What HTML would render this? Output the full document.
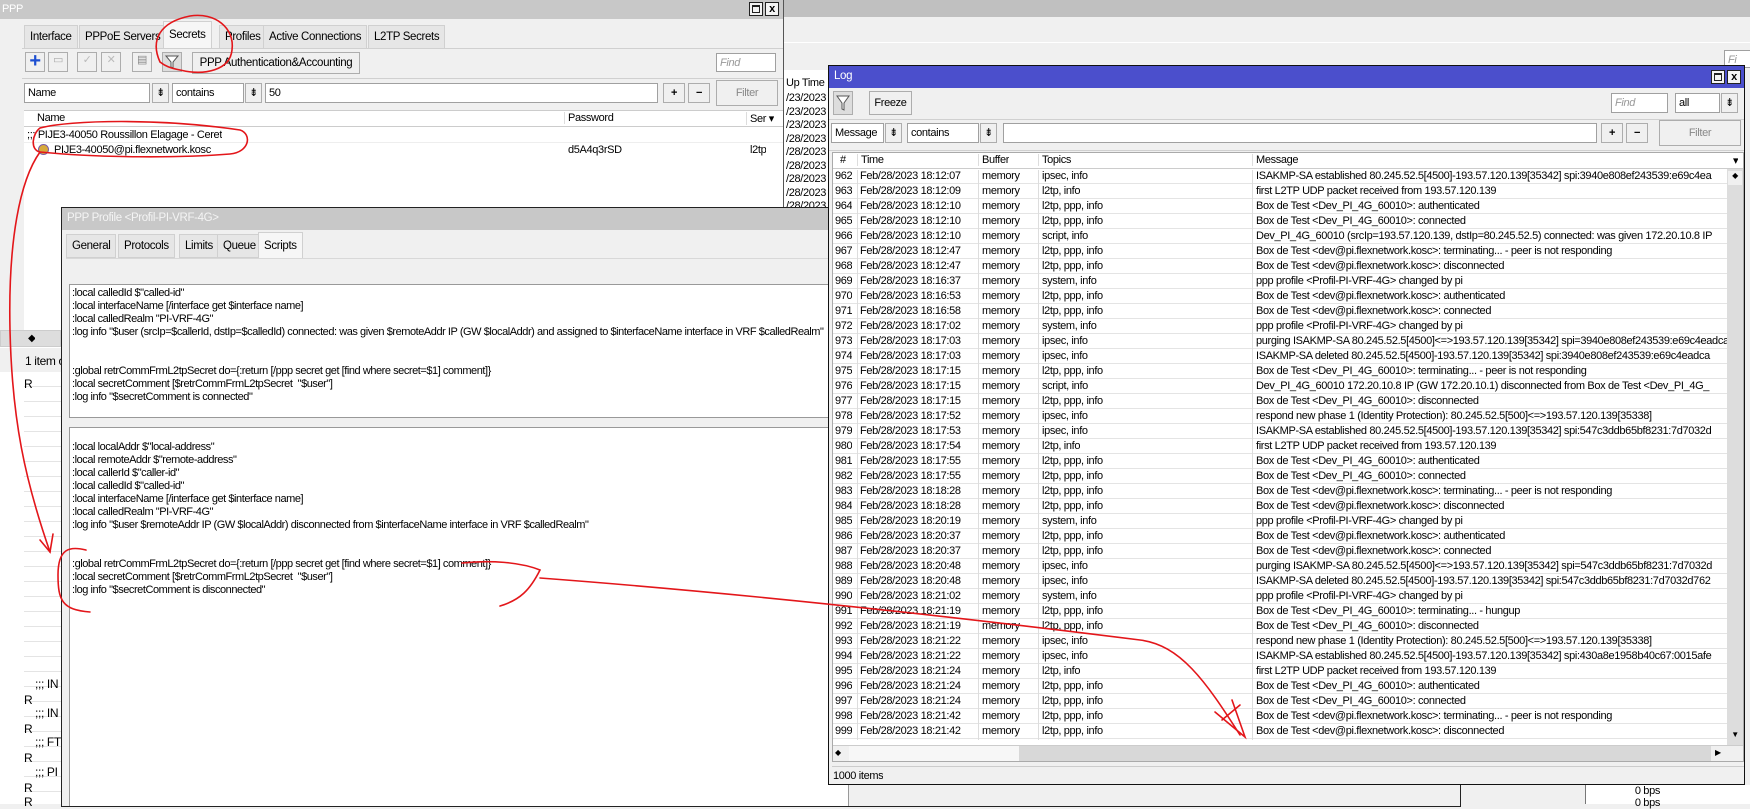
<!DOCTYPE html>
<html><head><meta charset="utf-8">
<style>
*{box-sizing:border-box;margin:0;padding:0}
body{width:1750px;height:804px;overflow:hidden;background:#f0f0f0;position:relative;font-family:"Liberation Sans",sans-serif;font-size:11px;letter-spacing:-0.35px;color:#000}
.a{position:absolute;white-space:nowrap;overflow:hidden}
.btn{position:absolute;background:#f0f0f0;border:1px solid #adadad}
.inp{position:absolute;background:#fff;border:1px solid #a0a0a0;padding-left:3px;line-height:18px}
.tab{position:absolute;border:1px solid #d0d0d0;background:#e6e6e6;padding:0 5px;line-height:22px;font-size:11.5px}
.tab.on{background:#f6f6f6;border-bottom:none;line-height:26px}
.row{position:absolute;left:0;height:15px;border-bottom:1px solid #e4e4e4;width:100%}
.row span{position:absolute;top:1px;white-space:nowrap;overflow:hidden}
.code{position:absolute;font-size:11px;line-height:13px;white-space:pre;overflow:hidden;letter-spacing:-0.45px}
</style></head><body>

<!-- background window top right -->
<div class="a" style="left:783px;top:0;width:967px;height:17px;background:#c0c0c0"></div>
<div class="a" style="left:783px;top:42px;width:967px;height:1px;background:#fff"></div>
<div class="inp" style="left:1724px;top:50px;width:30px;height:18px;color:#999;font-style:italic">Fi</div>
<div class="a" style="left:783px;top:70px;width:45px;height:160px;background:#fff;border-left:1px solid #999"></div>
<div class="a" style="left:786px;top:77px;">Up Time</div>
<div class="a" style="left:786px;top:92px;width:42px;line-height:13.5px;white-space:pre">/23/2023
/23/2023
/23/2023
/28/2023
/28/2023
/28/2023
/28/2023
/28/2023
/28/2023</div>
<!-- bottom right bps -->
<div class="a" style="left:1585px;top:785px;width:1px;height:19px;background:#777"></div>
<div class="a" style="left:1586px;top:785px;width:164px;height:19px;background:#fff"></div>
<div class="a" style="left:1620px;top:785px;width:40px;text-align:right">0 bps</div>
<div class="a" style="left:1620px;top:797px;width:40px;text-align:right">0 bps</div>

<!-- PPP window -->
<div class="a" style="left:0;top:0;width:784px;height:360px;background:#f0f0f0;border-right:1px solid #555">
 <div class="a" style="left:0;top:0;width:783px;height:19px;background:#c8c8c8;color:#fff;padding:3px 2px;font-size:11px">PPP</div>
 <div class="a" style="left:749px;top:2px;width:14px;height:14px;border:1px solid #222;background:#f4f4f4"><div style="margin:2px;width:8px;height:8px;border:1px solid #222;border-top-width:2px"></div></div>
 <div class="a" style="left:765px;top:2px;width:14px;height:14px;border:1px solid #222;background:#f4f4f4;font-weight:bold;text-align:center;line-height:12px">x</div>
 <div class="tab" style="left:24px;top:25px">Interface</div>
 <div class="tab" style="left:79px;top:25px">PPPoE Servers</div>
 <div class="tab on" style="left:163px;top:21px">Secrets</div>
 <div class="tab" style="left:219px;top:25px">Profiles</div>
 <div class="tab" style="left:263px;top:25px">Active Connections</div>
 <div class="tab" style="left:368px;top:25px">L2TP Secrets</div>
 <div class="a" style="left:22px;top:48px;width:761px;height:1px;background:#d0d0d0"></div>
 <div class="btn" style="left:25px;top:52px;width:20px;height:20px;color:#1d4fd1;font-weight:bold;font-size:20px;line-height:16px;text-align:center">+</div>
 <div class="btn" style="left:48px;top:52px;width:20px;height:20px;color:#aaa;text-align:center">▭</div>
 <div class="btn" style="left:77px;top:52px;width:20px;height:20px;color:#bbb;text-align:center">✓</div>
 <div class="btn" style="left:101px;top:52px;width:20px;height:20px;color:#bbb;text-align:center">✕</div>
 <div class="btn" style="left:132px;top:52px;width:20px;height:20px;color:#888;text-align:center">▤</div>
 <div class="btn" style="left:162px;top:52px;width:20px;height:20px;background:#ddd"><svg width="18" height="18" viewBox="0 0 18 18"><path d="M3,3 L15,3 L10,9 L10,15 L8,14 L8,9 Z" fill="#fff" stroke="#555"/></svg></div>
 <div class="btn" style="left:192px;top:52px;width:168px;height:22px;line-height:20px;text-align:center;font-size:11.5px">PPP Authentication&amp;Accounting</div>
 <div class="inp" style="left:716px;top:53px;width:60px;height:19px;color:#999;font-style:italic">Find</div>
 <div class="a" style="left:22px;top:78px;width:761px;height:1px;background:#d0d0d0"></div>
 <div class="inp" style="left:24px;top:83px;width:126px;height:20px">Name</div>
 <div class="btn" style="left:152px;top:83px;width:17px;height:20px;text-align:center;line-height:18px">⇟</div>
 <div class="inp" style="left:172px;top:83px;width:72px;height:20px">contains</div>
 <div class="btn" style="left:245px;top:83px;width:17px;height:20px;text-align:center;line-height:18px">⇟</div>
 <div class="inp" style="left:265px;top:83px;width:393px;height:20px">50</div>
 <div class="btn" style="left:663px;top:83px;width:22px;height:20px;text-align:center;font-weight:bold;line-height:18px">+</div>
 <div class="btn" style="left:688px;top:83px;width:22px;height:20px;text-align:center;font-weight:bold;line-height:18px">−</div>
 <div class="btn" style="left:716px;top:80px;width:62px;height:26px;line-height:24px;text-align:center;color:#888">Filter</div>
 <div class="a" style="left:24px;top:110px;width:759px;height:230px;background:#fff;border-top:1px solid #ccc">
  <div class="a" style="left:0;top:0;width:759px;height:16px;border-bottom:1px solid #ccc;background:#fff"></div>
  <div class="a" style="left:13px;top:1px">Name</div>
  <div class="a" style="left:540px;top:1px;border-left:1px solid #ddd;padding-left:3px">Password</div>
  <div class="a" style="left:722px;top:1px;border-left:1px solid #ddd;padding-left:3px">Ser ▾</div>
  <div class="a" style="left:0;top:17px;width:759px;height:15px;border-bottom:1px solid #eee"></div>
  <div class="a" style="left:3px;top:18px">;;; PIJE3-40050 Roussillon Elagage - Ceret</div>
  <div class="a" style="left:14px;top:33px;width:11px;height:11px;border-radius:50%;background:#d7a93c;border:1px solid #7a5aa8"></div>
  <div class="a" style="left:30px;top:33px">PIJE3-40050@pi.flexnetwork.kosc</div>
  <div class="a" style="left:544px;top:33px">d5A4q3rSD</div>
  <div class="a" style="left:726px;top:33px">l2tp</div>
 </div>
</div>
<!-- left strip of PPP below -->
<div class="a" style="left:0;top:330px;width:61px;height:474px;background:#fff">
 <div class="a" style="left:0;top:0;width:61px;height:17px;background:#ddd;border:1px solid #ccc"></div>
 <div class="a" style="left:28px;top:3px;font-size:10px">◆</div>
 <div class="a" style="left:0;top:18px;width:61px;height:24px;background:#f0f0f0"></div>
 <div class="a" style="left:25px;top:24px;font-size:12px">1 item o</div>
</div>
<div class="a" style="left:24px;top:372px;width:37px;height:432px;background:repeating-linear-gradient(#fff 0 14px,#e4e4e4 14px 15px)"></div>
<div class="a" style="left:24px;top:377px;font-size:12px">R</div>
<div class="a" style="left:35px;top:677px;font-size:12px">;;; IN</div>
<div class="a" style="left:24px;top:693px;font-size:12px">R</div>
<div class="a" style="left:35px;top:706px;font-size:12px">;;; IN</div>
<div class="a" style="left:24px;top:722px;font-size:12px">R</div>
<div class="a" style="left:35px;top:735px;font-size:12px">;;; FT</div>
<div class="a" style="left:24px;top:751px;font-size:12px">R</div>
<div class="a" style="left:35px;top:765px;font-size:12px">;;; PI</div>
<div class="a" style="left:24px;top:781px;font-size:12px">R</div>
<div class="a" style="left:24px;top:795px;font-size:12px">R</div>

<!-- PPP Profile window -->
<div class="a" style="left:61px;top:207px;width:1400px;height:600px;background:#f0f0f0;border:1px solid #222">
 <div class="a" style="left:0;top:0;width:1400px;height:22px;background:#c8c8c8;color:#f4f4f4;padding:4px 5px;font-size:11.5px">PPP Profile &lt;Profil-PI-VRF-4G&gt;</div>
 <div class="tab" style="left:4px;top:26px">General</div>
 <div class="tab" style="left:56px;top:26px">Protocols</div>
 <div class="tab" style="left:117px;top:26px">Limits</div>
 <div class="tab" style="left:155px;top:26px">Queue</div>
 <div class="tab on" style="left:196px;top:24px">Scripts</div>
 <div class="a" style="left:4px;top:50px;width:796px;height:1px;background:#d8d8d8"></div>
 <div class="a" style="left:7px;top:76px;width:800px;height:134px;background:#fff;border:1px solid #999"></div>
 <div class="code" style="left:10px;top:79px;width:780px">:local calledId $"called-id"
:local interfaceName [/interface get $interface name]
:local calledRealm "PI-VRF-4G"
:log info "$user (srcIp=$callerId, dstIp=$calledId) connected: was given $remoteAddr IP (GW $localAddr) and assigned to $interfaceName interface in VRF $calledRealm"


:global retrCommFrmL2tpSecret do={:return [/ppp secret get [find where secret=$1] comment]}
:local secretComment [$retrCommFrmL2tpSecret  "$user"]
:log info "$secretComment is connected"</div>
 <div class="a" style="left:7px;top:219px;width:780px;height:400px;background:#fff;border:1px solid #999"></div>
 <div class="code" style="left:10px;top:233px;width:770px">:local localAddr $"local-address"
:local remoteAddr $"remote-address"
:local callerId $"caller-id"
:local calledId $"called-id"
:local interfaceName [/interface get $interface name]
:local calledRealm "PI-VRF-4G"
:log info "$user $remoteAddr IP (GW $localAddr) disconnected from $interfaceName interface in VRF $calledRealm"


:global retrCommFrmL2tpSecret do={:return [/ppp secret get [find where secret=$1] comment]}
:local secretComment [$retrCommFrmL2tpSecret  "$user"]
:log info "$secretComment is disconnected"</div>
</div>

<!-- Log window -->
<div class="a" style="left:828px;top:65px;width:917px;height:720px;background:#f0f0f0;border:1px solid #111">
 <div class="a" style="left:0;top:0;width:917px;height:22px;background:#4b4fcc;color:#fff;padding:4px 5px;font-size:11.5px">Log</div>
 <div class="a" style="left:882px;top:4px;width:14px;height:14px;border:1px solid #222;background:#f4f4f4"><div style="margin:2px;width:8px;height:8px;border:1px solid #222;border-top-width:2px"></div></div>
 <div class="a" style="left:898px;top:4px;width:14px;height:14px;border:1px solid #222;background:#f4f4f4;font-weight:bold;text-align:center;line-height:12px;color:#000">x</div>
 <div class="btn" style="left:4px;top:25px;width:20px;height:24px;background:#ddd"><svg width="18" height="22" viewBox="0 0 18 22"><path d="M3,4 L15,4 L10,11 L10,18 L8,17 L8,11 Z" fill="#fff" stroke="#555"/></svg></div>
 <div class="btn" style="left:40px;top:25px;width:43px;height:24px;line-height:22px;text-align:center">Freeze</div>
 <div class="inp" style="left:782px;top:27px;width:57px;height:20px;color:#999;font-style:italic">Find</div>
 <div class="inp" style="left:846px;top:27px;width:45px;height:20px">all</div>
 <div class="btn" style="left:892px;top:27px;width:17px;height:20px;text-align:center;line-height:18px">⇟</div>
 <div class="a" style="left:0;top:53px;width:917px;height:1px;background:#d0d0d0"></div>
 <div class="inp" style="left:2px;top:57px;width:53px;height:20px">Message</div>
 <div class="btn" style="left:56px;top:57px;width:17px;height:20px;text-align:center;line-height:18px">⇟</div>
 <div class="inp" style="left:78px;top:57px;width:72px;height:20px">contains</div>
 <div class="btn" style="left:151px;top:57px;width:17px;height:20px;text-align:center;line-height:18px">⇟</div>
 <div class="inp" style="left:174px;top:57px;width:594px;height:20px"></div>
 <div class="btn" style="left:772px;top:57px;width:22px;height:20px;text-align:center;font-weight:bold;line-height:18px">+</div>
 <div class="btn" style="left:797px;top:57px;width:22px;height:20px;text-align:center;font-weight:bold;line-height:18px">−</div>
 <div class="btn" style="left:830px;top:54px;width:82px;height:26px;line-height:24px;text-align:center;color:#888">Filter</div>
 <div class="a" style="left:0;top:84px;width:917px;height:1px;background:#d0d0d0"></div>
 <div class="a" style="left:3px;top:86px;width:912px;height:610px;background:#fff;border:1px solid #aaa">
  <div class="row" style="top:0;height:16px;border-bottom:1px solid #ccc"><span style="left:7px">#</span><span style="left:24px;border-left:1px solid #ddd;padding-left:3px">Time</span><span style="left:145px;border-left:1px solid #ddd;padding-left:3px">Buffer</span><span style="left:205px;border-left:1px solid #ddd;padding-left:3px">Topics</span><span style="left:419px;border-left:1px solid #ddd;padding-left:3px">Message</span><span style="left:900px">▾</span></div>
  <div id="rows" class="a" style="left:0;top:16px;width:894px;height:580px"></div>
  <div class="a" style="left:894px;top:16px;width:16px;height:576px;background:#ddd"><div style="position:absolute;left:1px;top:2px;width:14px;height:14px;font-size:8px;text-align:center;background:#f0f0f0">◆</div><div style="position:absolute;left:1px;top:561px;font-size:8px;width:14px;text-align:center">▼</div></div>
  <div class="a" style="left:0;top:592px;width:910px;height:16px;background:#f0f0f0;border-top:1px solid #ccc"><div style="position:absolute;left:2px;top:2px;font-size:8px">◆</div><div style="position:absolute;left:16px;top:0;width:170px;height:15px;background:#f7f7f7"></div><div style="position:absolute;left:186px;top:0;width:692px;height:15px;background:#d8d8d8"></div><div style="position:absolute;left:882px;top:2px;font-size:8px">▶</div></div>
 </div>
 <div class="a" style="left:3px;top:700px;width:912px;height:1px;background:#ccc"></div>
 <div class="a" style="left:4px;top:704px;font-size:11px">1000 items</div>
</div>

<svg class="a" style="left:0;top:0" width="1750" height="804" viewBox="0 0 1750 804">
<g fill="none" stroke="#e3161a" stroke-width="1.6" stroke-linecap="round">
<path d="M160,62 C150,40 160,22 190,16 C215,12 235,28 232,50 C230,70 205,76 180,70 C170,68 165,66 160,62"/>
<path d="M40,128 C70,120 160,118 240,130 C252,134 250,152 230,154 C180,158 100,158 40,152 C30,150 32,134 40,128"/>
<path d="M40,152 C20,180 8,240 10,330 C12,420 25,480 50,552"/>
<path d="M40,540 L50,552 L53,534"/>
<path d="M86,550 C70,546 58,548 58,575 C58,600 62,610 90,612"/>
<path d="M462,563 C490,560 520,562 540,570 C530,590 520,600 500,606"/>
<path d="M540,578 C700,590 900,610 1140,640 C1180,645 1205,680 1240,735"/>
<path d="M1215,712 L1245,737 L1232,700 M1222,720 L1240,705"/>
</g></svg>

<script>
var d=[
["962","18:12:07","ipsec, info","ISAKMP-SA established 80.245.52.5[4500]-193.57.120.139[35342] spi:3940e808ef243539:e69c4ea"],
["963","18:12:09","l2tp, info","first L2TP UDP packet received from 193.57.120.139"],
["964","18:12:10","l2tp, ppp, info","Box de Test <Dev_PI_4G_60010>: authenticated"],
["965","18:12:10","l2tp, ppp, info","Box de Test <Dev_PI_4G_60010>: connected"],
["966","18:12:10","script, info","Dev_PI_4G_60010 (srcIp=193.57.120.139, dstIp=80.245.52.5) connected: was given 172.20.10.8 IP"],
["967","18:12:47","l2tp, ppp, info","Box de Test <dev@pi.flexnetwork.kosc>: terminating... - peer is not responding"],
["968","18:12:47","l2tp, ppp, info","Box de Test <dev@pi.flexnetwork.kosc>: disconnected"],
["969","18:16:37","system, info","ppp profile <Profil-PI-VRF-4G> changed by pi"],
["970","18:16:53","l2tp, ppp, info","Box de Test <dev@pi.flexnetwork.kosc>: authenticated"],
["971","18:16:58","l2tp, ppp, info","Box de Test <dev@pi.flexnetwork.kosc>: connected"],
["972","18:17:02","system, info","ppp profile <Profil-PI-VRF-4G> changed by pi"],
["973","18:17:03","ipsec, info","purging ISAKMP-SA 80.245.52.5[4500]<=>193.57.120.139[35342] spi=3940e808ef243539:e69c4eadca"],
["974","18:17:03","ipsec, info","ISAKMP-SA deleted 80.245.52.5[4500]-193.57.120.139[35342] spi:3940e808ef243539:e69c4eadca"],
["975","18:17:15","l2tp, ppp, info","Box de Test <Dev_PI_4G_60010>: terminating... - peer is not responding"],
["976","18:17:15","script, info","Dev_PI_4G_60010 172.20.10.8 IP (GW 172.20.10.1) disconnected from Box de Test <Dev_PI_4G_"],
["977","18:17:15","l2tp, ppp, info","Box de Test <Dev_PI_4G_60010>: disconnected"],
["978","18:17:52","ipsec, info","respond new phase 1 (Identity Protection): 80.245.52.5[500]<=>193.57.120.139[35338]"],
["979","18:17:53","ipsec, info","ISAKMP-SA established 80.245.52.5[4500]-193.57.120.139[35342] spi:547c3ddb65bf8231:7d7032d"],
["980","18:17:54","l2tp, info","first L2TP UDP packet received from 193.57.120.139"],
["981","18:17:55","l2tp, ppp, info","Box de Test <Dev_PI_4G_60010>: authenticated"],
["982","18:17:55","l2tp, ppp, info","Box de Test <Dev_PI_4G_60010>: connected"],
["983","18:18:28","l2tp, ppp, info","Box de Test <dev@pi.flexnetwork.kosc>: terminating... - peer is not responding"],
["984","18:18:28","l2tp, ppp, info","Box de Test <dev@pi.flexnetwork.kosc>: disconnected"],
["985","18:20:19","system, info","ppp profile <Profil-PI-VRF-4G> changed by pi"],
["986","18:20:37","l2tp, ppp, info","Box de Test <dev@pi.flexnetwork.kosc>: authenticated"],
["987","18:20:37","l2tp, ppp, info","Box de Test <dev@pi.flexnetwork.kosc>: connected"],
["988","18:20:48","ipsec, info","purging ISAKMP-SA 80.245.52.5[4500]<=>193.57.120.139[35342] spi=547c3ddb65bf8231:7d7032d"],
["989","18:20:48","ipsec, info","ISAKMP-SA deleted 80.245.52.5[4500]-193.57.120.139[35342] spi:547c3ddb65bf8231:7d7032d762"],
["990","18:21:02","system, info","ppp profile <Profil-PI-VRF-4G> changed by pi"],
["991","18:21:19","l2tp, ppp, info","Box de Test <Dev_PI_4G_60010>: terminating... - hungup"],
["992","18:21:19","l2tp, ppp, info","Box de Test <Dev_PI_4G_60010>: disconnected"],
["993","18:21:22","ipsec, info","respond new phase 1 (Identity Protection): 80.245.52.5[500]<=>193.57.120.139[35338]"],
["994","18:21:22","ipsec, info","ISAKMP-SA established 80.245.52.5[4500]-193.57.120.139[35342] spi:430a8e1958b40c67:0015afe"],
["995","18:21:24","l2tp, info","first L2TP UDP packet received from 193.57.120.139"],
["996","18:21:24","l2tp, ppp, info","Box de Test <Dev_PI_4G_60010>: authenticated"],
["997","18:21:24","l2tp, ppp, info","Box de Test <Dev_PI_4G_60010>: connected"],
["998","18:21:42","l2tp, ppp, info","Box de Test <dev@pi.flexnetwork.kosc>: terminating... - peer is not responding"],
["999","18:21:42","l2tp, ppp, info","Box de Test <dev@pi.flexnetwork.kosc>: disconnected"]];
var h="";function e(s){return s.replace(/&/g,"&amp;").replace(/</g,"&lt;").replace(/>/g,"&gt;")}
d.forEach(function(r,i){h+='<div class="row" style="top:'+(i*15)+'px"><span style="left:2px">'+r[0]+'</span><span style="left:24px;border-left:1px solid #ddd;padding-left:2px;height:15px">Feb/28/2023 '+r[1]+'</span><span style="left:145px;border-left:1px solid #ddd;padding-left:3px;height:15px">memory</span><span style="left:205px;border-left:1px solid #ddd;padding-left:3px;height:15px">'+r[2]+'</span><span style="left:419px;border-left:1px solid #ddd;padding-left:3px;width:475px;height:15px">'+e(r[3])+'</span></div>'});
document.getElementById("rows").innerHTML=h;
</script>
</body></html>
